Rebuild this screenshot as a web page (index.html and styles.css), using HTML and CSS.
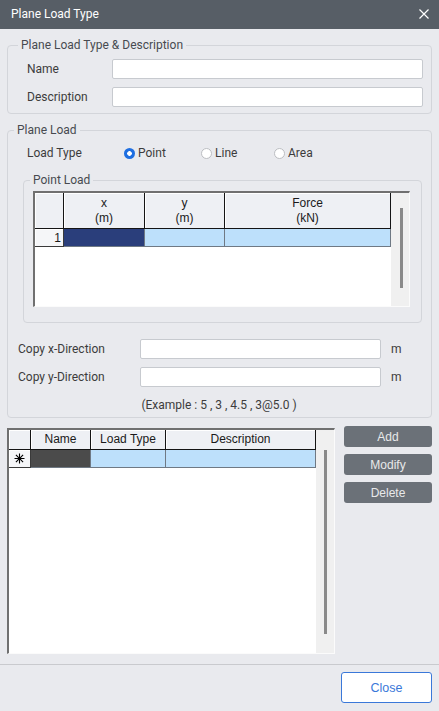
FILE: index.html
```html
<!DOCTYPE html>
<html>
<head>
<meta charset="utf-8">
<link rel="stylesheet" href="styles.css">
</head>
<body>
<div class="window">
  <div class="titlebar">
    <span class="title">Plane Load Type</span>
    <svg class="close-x" viewBox="0 0 10 10" width="10" height="10"><path d="M0.5 0.5 L9.5 9.5 M9.5 0.5 L0.5 9.5" stroke="#ffffff" stroke-width="1.2" fill="none"/></svg>
  </div>
  <div class="content">
    <fieldset class="group g1">
      <legend>Plane Load Type &amp; Description</legend>
      <div class="g1-body">
        <div class="field-row"><span class="field-label">Name</span><div class="input"></div></div>
        <div class="field-row"><span class="field-label">Description</span><div class="input"></div></div>
      </div>
    </fieldset>

    <fieldset class="group g2">
      <legend>Plane Load</legend>
      <div class="g2-body">
        <div class="loadtype-row">
          <span class="lt-label">Load Type</span>
          <span class="radio r-point"><span class="dot checked"></span>Point</span>
          <span class="radio r-line"><span class="dot"></span>Line</span>
          <span class="radio r-area"><span class="dot"></span>Area</span>
        </div>

        <fieldset class="group g3">
          <legend>Point Load</legend>
          <div class="g3-body">
            <div class="grid pgrid">
              <div class="grid-main">
                <div class="prow phead">
                  <div class="hcell"></div>
                  <div class="hcell">x<br>(m)</div>
                  <div class="hcell">y<br>(m)</div>
                  <div class="hcell">Force<br>(kN)</div>
                </div>
                <div class="prow pdata">
                  <div class="rowhdr num">1</div>
                  <div class="dcell sel-navy"></div>
                  <div class="dcell sel-blue"></div>
                  <div class="dcell sel-blue"></div>
                </div>
              </div>
              <div class="vscroll pscroll"><div class="thumb"></div></div>
            </div>
          </div>
        </fieldset>

        <div class="copy-rows">
          <div class="copy-row"><span class="copy-label">Copy x-Direction</span><div class="input copy-input"></div><span class="unit">m</span></div>
          <div class="copy-row"><span class="copy-label">Copy y-Direction</span><div class="input copy-input"></div><span class="unit">m</span></div>
        </div>
        <div class="example">(Example : 5 , 3 , 4.5 , 3@5.0 )</div>
      </div>
    </fieldset>

    <div class="list-area">
      <div class="grid lgrid">
        <div class="grid-main">
          <div class="lrow lhead">
            <div class="hcell"></div>
            <div class="hcell">Name</div>
            <div class="hcell">Load Type</div>
            <div class="hcell">Description</div>
          </div>
          <div class="lrow ldata">
            <div class="rowhdr star"><svg viewBox="0 0 11 11" width="11" height="11"><path d="M5.5 0.5 V10.5 M0.5 5.5 H10.5 M1.9 1.9 L9.1 9.1 M9.1 1.9 L1.9 9.1" stroke="#000" stroke-width="1.1" fill="none"/></svg></div>
            <div class="dcell sel-dark"></div>
            <div class="dcell sel-blue"></div>
            <div class="dcell sel-blue"></div>
          </div>
        </div>
        <div class="vscroll lscroll"><div class="thumb"></div></div>
      </div>
      <div class="btn-col">
        <div class="gbtn">Add</div>
        <div class="gbtn">Modify</div>
        <div class="gbtn">Delete</div>
      </div>
    </div>
  </div>
  <div class="footer">
    <div class="close-btn">Close</div>
  </div>
</div>
</body>
</html>
```

FILE: styles.css
```css
* { box-sizing: border-box; }

html, body {
  margin: 0;
  padding: 0;
  background: #e9eaee;
}

body {
  font-family: Roboto, "Noto Sans", Arial, sans-serif;
  font-size: 12px;
  color: #3c3c3c;
}

.window {
  width: 439px;
  height: 711px;
  display: flex;
  flex-direction: column;
  background: #e9eaee;
  overflow: hidden;
}

.titlebar {
  height: 29px;
  flex: 0 0 29px;
  background: #575e66;
  display: flex;
  align-items: center;
  justify-content: space-between;
  padding: 0 10px 1px 11px;
}

.title {
  color: #ffffff;
  font-size: 12px;
  line-height: 16px;
}

.close-x {
  display: block;
  margin-top: -1px;
}

.content {
  padding: 8px 7px 10px 7px;
}

fieldset.group {
  margin: 0;
  padding: 0;
  border: 1px solid #d3d5da;
  border-radius: 4px;
  min-width: 0;
}

fieldset.group > legend {
  padding: 0 3px;
  line-height: 16px;
  font-size: 12px;
  color: #474a50;
}

fieldset.g1 > legend { margin-left: 10px; }
fieldset.g2 > legend { margin-left: 6px; }
fieldset.g3 > legend { margin-left: 6px; }

.g1-body {
  padding: 6px 8px 6px 19px;
  display: flex;
  flex-direction: column;
  gap: 8px;
}

.field-row {
  display: flex;
  align-items: center;
  height: 20px;
}

.field-label {
  width: 85px;
  flex: 0 0 85px;
  line-height: 16px;
}

.input {
  height: 20px;
  background: #ffffff;
  border: 1px solid #c7cacf;
  border-radius: 2px;
}

.field-row .input { flex: 1; }

fieldset.g2 { margin-top: 8px; }

.g2-body {
  padding: 5px 9px 4px 10px;
}

.loadtype-row {
  display: flex;
  align-items: center;
  height: 20px;
  margin-left: 9px;
}

.lt-label {
  width: 97px;
  flex: 0 0 97px;
}

.radio {
  display: flex;
  align-items: center;
  gap: 3px;
}

.r-point { width: 77px; }
.r-line { width: 73px; }

.dot {
  width: 11px;
  height: 11px;
  border-radius: 50%;
  background: #ffffff;
  border: 1px solid #bcbec2;
}

.dot.checked {
  border: none;
  background: radial-gradient(circle at center, #ffffff 0, #ffffff 2px, #1f6fe1 2.6px);
}

fieldset.g3 {
  margin-top: 9px;
  margin-left: 5px;
}

.g3-body {
  padding: 3px 11px 15px 9px;
}

.grid {
  display: flex;
  background: #ffffff;
  border-style: solid;
  border-width: 2px 1px 1px 2px;
  border-color: #707070 #fbfbfb #fbfbfb #707070;
  font-family: "Liberation Sans", Arial, sans-serif;
  font-size: 12px;
  color: #1a1a1a;
}

.grid-main {
  flex: 1;
  display: flex;
  flex-direction: column;
}

.hcell {
  background: #eef0f4;
  border-right: 1px solid #141414;
  border-bottom: 1px solid #141414;
  box-shadow: inset 1px 1px 0 #ffffff;
  display: flex;
  align-items: center;
  justify-content: center;
  text-align: center;
  line-height: 15px;
}

.dcell {
  border-right: 1px solid #6f7984;
  border-bottom: 1px solid #6f7984;
}

.rowhdr {
  background: #f5f6f8;
  border-right: 1px solid #3a3a3a;
  border-bottom: 1px solid #3a3a3a;
  box-shadow: inset 1px 1px 0 #ffffff;
  display: flex;
  align-items: center;
}

.rowhdr.num {
  justify-content: flex-end;
  padding-right: 2px;
  font-size: 12px;
}

.rowhdr.star {
  justify-content: center;
}

.rowhdr.star svg { display: block; }

.sel-navy { background: #2a3e7b; }
.sel-blue { background: #bde0fb; }
.sel-dark { background: #4b4b4b; }

.vscroll {
  background: #f0f0f0;
}

.thumb {
  width: 3px;
  background: #8a8a8a;
}

/* Point load grid */
.pgrid {
  height: 116px;
}

.prow {
  display: grid;
  grid-template-columns: 29px 81px 80px 166px;
}

.phead { height: 36px; }
.pdata { height: 18px; }

.pscroll {
  width: 18px;
}

.pscroll .thumb {
  margin: 15px 0 0 9px;
  height: 80px;
}

/* Copy rows */
.copy-rows {
  margin-top: 16px;
  display: flex;
  flex-direction: column;
  gap: 8px;
}

.copy-row {
  display: flex;
  align-items: center;
  height: 20px;
}

.copy-label {
  width: 122px;
  flex: 0 0 122px;
}

.copy-input {
  width: 241px;
}

.unit {
  margin-left: 10px;
}

.example {
  margin-top: 10px;
  line-height: 16px;
  text-align: center;
  padding-right: 2px;
}

/* List area */
.list-area {
  margin-top: 8px;
  display: flex;
  align-items: flex-start;
  gap: 9px;
}

.lgrid {
  margin-top: 2px;
  width: 328px;
  height: 226px;
}

.lrow {
  display: grid;
  grid-template-columns: 22px 60px 75px 150px;
}

.lhead { height: 20px; }
.ldata { height: 18px; }

.lscroll {
  width: 18px;
}

.lscroll .thumb {
  margin: 20px 0 0 8px;
  height: 184px;
}

.btn-col {
  display: flex;
  flex-direction: column;
  gap: 7px;
  width: 88px;
}

.gbtn {
  height: 21px;
  background: #6b7178;
  color: #e8e9ea;
  border-radius: 3px;
  display: flex;
  align-items: center;
  justify-content: center;
  font-family: "Liberation Sans", Arial, sans-serif;
  font-size: 12px;
}

/* Footer */
.footer {
  flex: 1;
  border-top: 1px solid #c9cace;
  display: flex;
  justify-content: flex-end;
  align-items: flex-start;
  padding: 7px 7px 0 0;
}

.close-btn {
  width: 91px;
  height: 31px;
  background: #ffffff;
  border: 1.5px solid #3a78d9;
  border-radius: 3px;
  color: #3a78d9;
  display: flex;
  align-items: center;
  justify-content: center;
  font-family: "Liberation Sans", Arial, sans-serif;
  font-size: 12.5px;
}
```
